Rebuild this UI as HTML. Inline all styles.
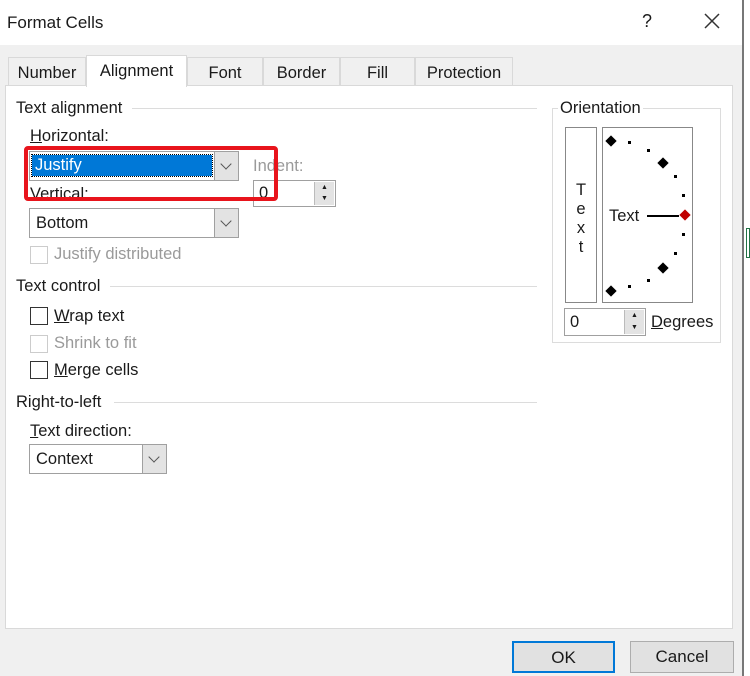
<!DOCTYPE html>
<html><head><meta charset="utf-8"><style>
*{margin:0;padding:0;box-sizing:border-box}
body{width:750px;height:676px;overflow:hidden;background:#fff;font-family:"Liberation Sans",sans-serif;font-size:16.5px;color:#1a1a1a;position:relative}
.a{position:absolute}
.dlg{left:0;top:0;width:744px;height:676px;background:#f0f0f0;border-right:2px solid #777}
.title{left:0;top:0;width:742px;height:45px;background:#fff}
.tab{top:57px;height:29px;border:1px solid #d9d9d9;border-bottom:none;background:#f0f0f0;text-align:center;line-height:30px;font-size:16.5px}
.panel{left:5px;top:85px;width:728px;height:544px;background:#fff;border:1px solid #d9d9d9}
.grp{height:1px;background:#dcdcdc}
.combo{border:1px solid #a0a0a0;background:#fff;height:30px}
.dd{position:absolute;right:0;top:0;width:24px;height:28px;background:#e3e3e3;border-left:1px solid #a0a0a0}
.dd:after{content:"";position:absolute;left:7px;top:8px;width:7px;height:7px;border-right:1.5px solid #555;border-bottom:1.5px solid #555;transform:rotate(45deg)}
.cb{width:18px;height:18px;border:1.5px solid #333;background:#fff}
.dis{color:#9a9a9a}
.btn{top:641px;height:32px;background:#e1e1e1;border:1px solid #adadad;text-align:center;line-height:30px;font-size:17px}
.dot{width:3px;height:3px;background:#000}
.dia{width:8px;height:8px;background:#000;transform:rotate(45deg)}
u{text-decoration:underline}
</style></head><body>
<div class="a" style="left:744px;top:0;width:6px;height:676px;background:#fff"></div>
<div class="a" style="left:746px;top:228px;width:4px;height:30px;border:1px solid #217346"></div>
<div class="a dlg"></div>
<div class="a title"></div>
<div class="a" style="left:7px;top:13px;font-size:17px">Format Cells</div>
<div class="a" style="left:642px;top:11px;font-size:18px">?</div>
<svg class="a" style="left:704px;top:13px" width="16" height="16"><path d="M1 1L15 15M15 1L1 15" stroke="#333" stroke-width="1.5"/></svg>
<div class="a tab" style="left:8px;width:78px">Number</div>
<div class="a tab" style="left:86px;width:101px;top:55px;height:32px;background:#fff;z-index:2">Alignment</div>
<div class="a tab" style="left:187px;width:76px">Font</div>
<div class="a tab" style="left:263px;width:77px">Border</div>
<div class="a tab" style="left:340px;width:75px">Fill</div>
<div class="a tab" style="left:415px;width:98px">Protection</div>
<div class="a panel"></div>

<div class="a" style="left:16px;top:99px">Text alignment</div>
<div class="a grp" style="left:132px;top:108px;width:405px"></div>
<div class="a" style="left:30px;top:127px"><u>H</u>orizontal:</div>
<div class="a combo" style="left:29px;top:151px;width:210px"><div class="a" style="left:2px;top:3px;width:180px;height:21px;background:#0078d7;color:#fff;padding-left:3px;line-height:21px;outline:1px dotted #000">Justify</div><div class="dd"></div></div>
<div class="a dis" style="left:253px;top:157px">Indent:</div>
<div class="a combo" style="left:253px;top:180px;width:83px;height:27px"><div class="a" style="left:5px;top:3px">0</div><div class="a" style="right:1px;top:1px;width:20px;height:23px;background:#e3e3e3;border-left:1px solid #bbb;font-size:7px;line-height:11px;text-align:center">▲<br>▼</div></div>
<div class="a" style="left:30px;top:185px"><u>V</u>ertical:</div>
<div class="a" style="left:24px;top:146px;width:254px;height:55px;border:4px solid #e8141c;border-radius:4px"></div>
<div class="a combo" style="left:29px;top:208px;width:210px"><div class="a" style="left:6px;top:5px">Bottom</div><div class="dd"></div></div>
<div class="a cb" style="left:30px;top:246px;border-color:#ccc;border-width:1px"></div>
<div class="a dis" style="left:54px;top:245px">Justify distributed</div>

<div class="a" style="left:16px;top:277px">Text control</div>
<div class="a grp" style="left:110px;top:286px;width:427px"></div>
<div class="a cb" style="left:30px;top:307px"></div>
<div class="a" style="left:54px;top:307px"><u>W</u>rap text</div>
<div class="a cb" style="left:30px;top:335px;border-color:#ccc;border-width:1px"></div>
<div class="a dis" style="left:54px;top:334px">Shrink to fit</div>
<div class="a cb" style="left:30px;top:361px"></div>
<div class="a" style="left:54px;top:361px"><u>M</u>erge cells</div>

<div class="a" style="left:16px;top:393px">Right-to-left</div>
<div class="a grp" style="left:114px;top:402px;width:423px"></div>
<div class="a" style="left:30px;top:422px"><u>T</u>ext direction:</div>
<div class="a combo" style="left:29px;top:444px;width:138px"><div class="a" style="left:6px;top:5px">Context</div><div class="dd"></div></div>

<div class="a" style="left:552px;top:108px;width:169px;height:235px;border:1px solid #dcdcdc"></div>
<div class="a" style="left:558px;top:99px;background:#fff;padding:0 2px">Orientation</div>
<div class="a" style="left:565px;top:127px;width:32px;height:176px;border:1px solid #888;text-align:center;line-height:19px;padding-top:53px">T<br>e<br>x<br>t</div>
<div class="a" style="left:602px;top:127px;width:91px;height:176px;border:1px solid #888"></div>
<div class="a dia" style="left:607px;top:137px"></div>
<div class="a dot" style="left:628px;top:141px"></div>
<div class="a dot" style="left:647px;top:149px"></div>
<div class="a dia" style="left:659px;top:159px"></div>
<div class="a dot" style="left:674px;top:175px"></div>
<div class="a dot" style="left:682px;top:194px"></div>
<div class="a" style="left:609px;top:207px">Text</div>
<div class="a" style="left:647px;top:215px;width:32px;height:1.5px;background:#000"></div>
<div class="a dia" style="left:681px;top:211px;background:#c00000"></div>
<div class="a dot" style="left:682px;top:233px"></div>
<div class="a dot" style="left:674px;top:252px"></div>
<div class="a dia" style="left:659px;top:264px"></div>
<div class="a dot" style="left:647px;top:279px"></div>
<div class="a dot" style="left:628px;top:285px"></div>
<div class="a dia" style="left:607px;top:287px"></div>
<div class="a combo" style="left:564px;top:308px;width:82px;height:28px"><div class="a" style="left:5px;top:4px">0</div><div class="a" style="right:1px;top:1px;width:20px;height:24px;background:#e3e3e3;border-left:1px solid #bbb;font-size:7px;line-height:12px;text-align:center">▲<br>▼</div></div>
<div class="a" style="left:651px;top:313px"><u>D</u>egrees</div>

<div class="a btn" style="left:512px;width:103px;border:2px solid #0078d7">OK</div>
<div class="a btn" style="left:630px;width:104px">Cancel</div>
</body></html>
